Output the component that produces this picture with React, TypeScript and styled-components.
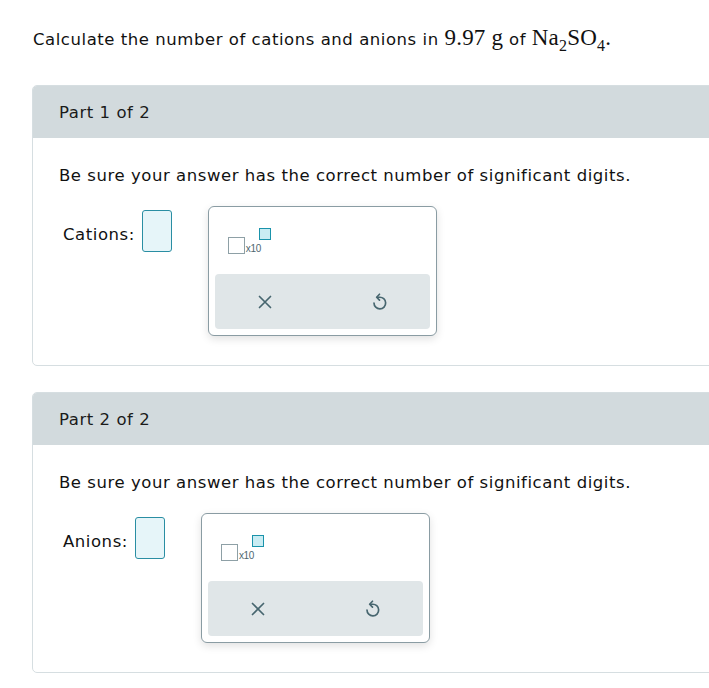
import styled, { createGlobalStyle } from "styled-components";

const GlobalStyle = createGlobalStyle`
  html, body {
    margin: 0;
    padding: 0;
    overflow: hidden;
    background: #ffffff;
  }
  body {
    font-family: "DejaVu Sans", Verdana, sans-serif;
    color: #111;
  }
`;

const Page = styled.div`
  width: 740px;
  padding: 25px 0 0 32px;
`;

const Question = styled.div`
  font-size: 16.5px;
  letter-spacing: 0.55px;
  line-height: 26px;
  padding-left: 1px;
`;

const Serif = styled.span`
  font-family: "Liberation Serif", "Times New Roman", serif;
  font-size: 23px;
  letter-spacing: 0.2px;
`;

const Sub = styled.sub`
  font-size: 16px;
  vertical-align: -6px;
  line-height: 0;
`;

const Card = styled.section`
  width: 700px;
  border: 1px solid #d6dee1;
  border-radius: 5px;
  margin-top: ${(p: { $gap: number }) => p.$gap}px;
  overflow: hidden;
`;

const CardHeader = styled.div`
  height: 52px;
  background: #d2dadd;
  display: flex;
  align-items: center;
  padding-left: 26px;
  font-size: 16.5px;
  letter-spacing: 0.55px;
  color: #1a1a1a;
`;

const CardBody = styled.div`
  padding: 28px 26px 29px;
`;

const Note = styled.div`
  font-size: 16.5px;
  letter-spacing: 0.55px;
  line-height: 20px;
`;

const AnswerRow = styled.div`
  display: flex;
  align-items: flex-start;
  margin-top: 20px;
  padding-left: 4px;
`;

const Label = styled.div`
  font-size: 16.5px;
  letter-spacing: 0.55px;
  line-height: 20px;
  margin-top: 19px;
`;

const AnswerBox = styled.div`
  width: 28px;
  height: 40px;
  margin: 4px 0 0 7px;
  border: 1.5px solid #2a8ea3;
  border-radius: 3px;
  background: #e6f5f9;
`;

const Popup = styled.div`
  box-sizing: border-box;
  width: 229px;
  height: 130px;
  margin-left: 36px;
  border: 1px solid #8a9ca3;
  border-radius: 6px;
  background: #fff;
  box-shadow: 0 3px 8px rgba(0, 0, 0, 0.12);
  display: flex;
  flex-direction: column;
  justify-content: space-between;
  padding: 21px 6px 6px;
`;

const Template = styled.div`
  display: flex;
  align-items: flex-end;
  padding-left: 13px;
  height: 26px;
`;

const BaseBox = styled.div`
  width: 15px;
  height: 15px;
  border: 1.5px solid #8ea0a6;
`;

const Times = styled.span`
  font-family: "Liberation Sans", Arial, sans-serif;
  font-size: 10px;
  letter-spacing: -0.3px;
  color: #4e6770;
  line-height: 10px;
  margin-left: 1px;
`;

const ExpBox = styled.div`
  width: 10px;
  height: 10px;
  border: 1.5px solid #1a93ab;
  background: #c9ecf3;
  align-self: flex-start;
  margin-left: -2px;
`;

const ButtonBar = styled.div`
  height: 55px;
  background: #e0e6e8;
  border-radius: 4px;
  display: flex;
  align-items: center;
  justify-content: space-between;
  padding: 0 30px;
`;

const IconButton = styled.button`
  border: none;
  background: transparent;
  padding: 0;
  width: 40px;
  height: 40px;
  display: flex;
  align-items: center;
  justify-content: center;
  color: #47666f;
  cursor: pointer;
`;

const ClearIcon = () => (
  <svg width="16" height="16" viewBox="0 0 16 16" fill="none" stroke="currentColor" strokeWidth="1.7" strokeLinecap="round">
    <path d="M2.5 2.5 L13.5 13.5 M13.5 2.5 L2.5 13.5" />
  </svg>
);

const UndoIcon = () => (
  <svg width="17" height="18" viewBox="0 0 16 17" fill="none" stroke="currentColor" strokeWidth="1.6" strokeLinecap="round" strokeLinejoin="round">
    <path d="M2.8 9.5 A5.5 5.5 0 1 0 8 4 H6" />
    <path d="M8 1.2 L5.3 4 L8 6.8" />
  </svg>
);

const Part = ({ index, label, gap }: { index: number; label: string; gap: number }) => (
  <Card $gap={gap}>
    <CardHeader>Part {index} of 2</CardHeader>
    <CardBody>
      <Note>Be sure your answer has the correct number of significant digits.</Note>
      <AnswerRow>
        <Label>{label}:</Label>
        <AnswerBox />
        <Popup>
          <Template>
            <BaseBox />
            <Times>x10</Times>
            <ExpBox />
          </Template>
          <ButtonBar>
            <IconButton aria-label="clear">
              <ClearIcon />
            </IconButton>
            <IconButton aria-label="undo">
              <UndoIcon />
            </IconButton>
          </ButtonBar>
        </Popup>
      </AnswerRow>
    </CardBody>
  </Card>
);

export default function App() {
  return (
    <>
      <GlobalStyle />
      <Page>
        <Question>
          Calculate the number of cations and anions in <Serif>9.97 g</Serif> of{" "}
          <Serif>
            Na<Sub>2</Sub>SO<Sub>4</Sub>.
          </Serif>
        </Question>
        <Part index={1} label="Cations" gap={32} />
        <Part index={2} label="Anions" gap={26} />
      </Page>
    </>
  );
}
